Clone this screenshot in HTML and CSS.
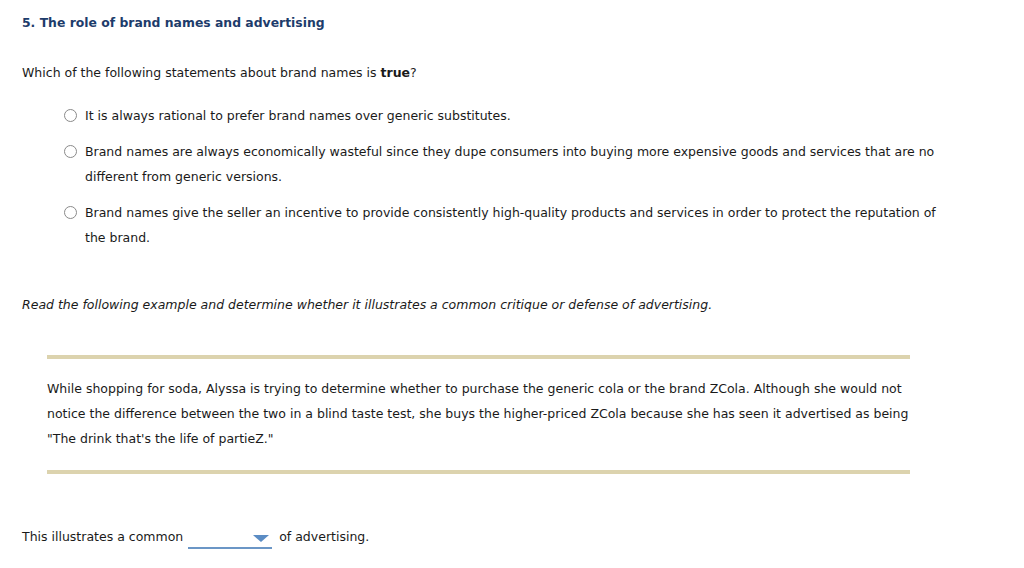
FILE: index.html
```html
<!DOCTYPE html>
<html>
<head>
<meta charset="utf-8">
<link rel="stylesheet" href="styles.css">
</head>
<body>
<div class="page">
  <h1 class="title">5. The role of brand names and advertising</h1>
  <p class="question">Which of the following statements about brand names is <b>true</b>?</p>
  <ul class="options">
    <li class="option"><span class="radio"></span><span class="option-text">It is always rational to prefer brand names over generic substitutes.</span></li>
    <li class="option"><span class="radio"></span><span class="option-text">Brand names are always economically wasteful since they dupe consumers into buying more expensive goods and services that are no different from generic versions.</span></li>
    <li class="option"><span class="radio"></span><span class="option-text">Brand names give the seller an incentive to provide consistently high-quality products and services in order to protect the reputation of the brand.</span></li>
  </ul>
  <p class="instruction">Read the following example and determine whether it illustrates a common critique or defense of advertising.</p>
  <div class="passage">
    <p>While shopping for soda, Alyssa is trying to determine whether to purchase the generic cola or the brand ZCola. Although she would not notice the difference between the two in a blind taste test, she buys the higher-priced ZCola because she has seen it advertised as being "The drink that's the life of partieZ."</p>
  </div>
  <p class="answer">This illustrates a common <span class="dropdown"><span class="arrow"></span></span> of advertising.</p>
</div>
</body>
</html>
```
FILE: styles.css
```css
html, body {
  margin: 0;
  padding: 0;
  background: #ffffff;
}
.page {
  padding: 15px 22px 14px;
  font-family: "DejaVu Sans", Verdana, sans-serif;
  font-size: 12.5px;
  color: #1a1a1a;
}
.title {
  margin: 0;
  font-size: 12.4px;
  line-height: 16px;
  font-weight: bold;
  color: #1d3c6b;
}
.question {
  margin: 32px 0 0;
  line-height: 20px;
}
.options {
  list-style: none;
  margin: 20px 0 0;
  padding: 0 0 0 42px;
  display: flex;
  flex-direction: column;
  gap: 11px;
}
.option {
  display: flex;
  align-items: flex-start;
  line-height: 25px;
}
.radio {
  flex: none;
  width: 11px;
  height: 11px;
  border: 1px solid #8a8a8a;
  border-radius: 50%;
  margin: 6px 8px 0 0;
  background: #fff;
}
.option-text {
  flex: 1;
  padding-right: 60px;
}
.instruction {
  margin: 45px 0 0;
  line-height: 20px;
  font-style: italic;
}
.passage {
  margin: 40px 0 0 25px;
  width: 863px;
  border-top: 4px solid #dcd3ae;
  border-bottom: 4px solid #dcd3ae;
  padding: 17px 0 19px;
}
.passage p {
  margin: 0;
  line-height: 25px;
}
.answer {
  margin: 53px 0 0;
  line-height: 20px;
}
.dropdown {
  display: inline-block;
  position: relative;
  width: 84px;
  height: 14px;
  border-bottom: 2px solid #6b96c6;
  margin: 0 3px 0 1px;
  vertical-align: -8px;
}
.arrow {
  position: absolute;
  right: 3px;
  top: 2px;
  width: 0;
  height: 0;
  border-left: 8px solid transparent;
  border-right: 8px solid transparent;
  border-top: 7px solid #5b8cc4;
}
```
